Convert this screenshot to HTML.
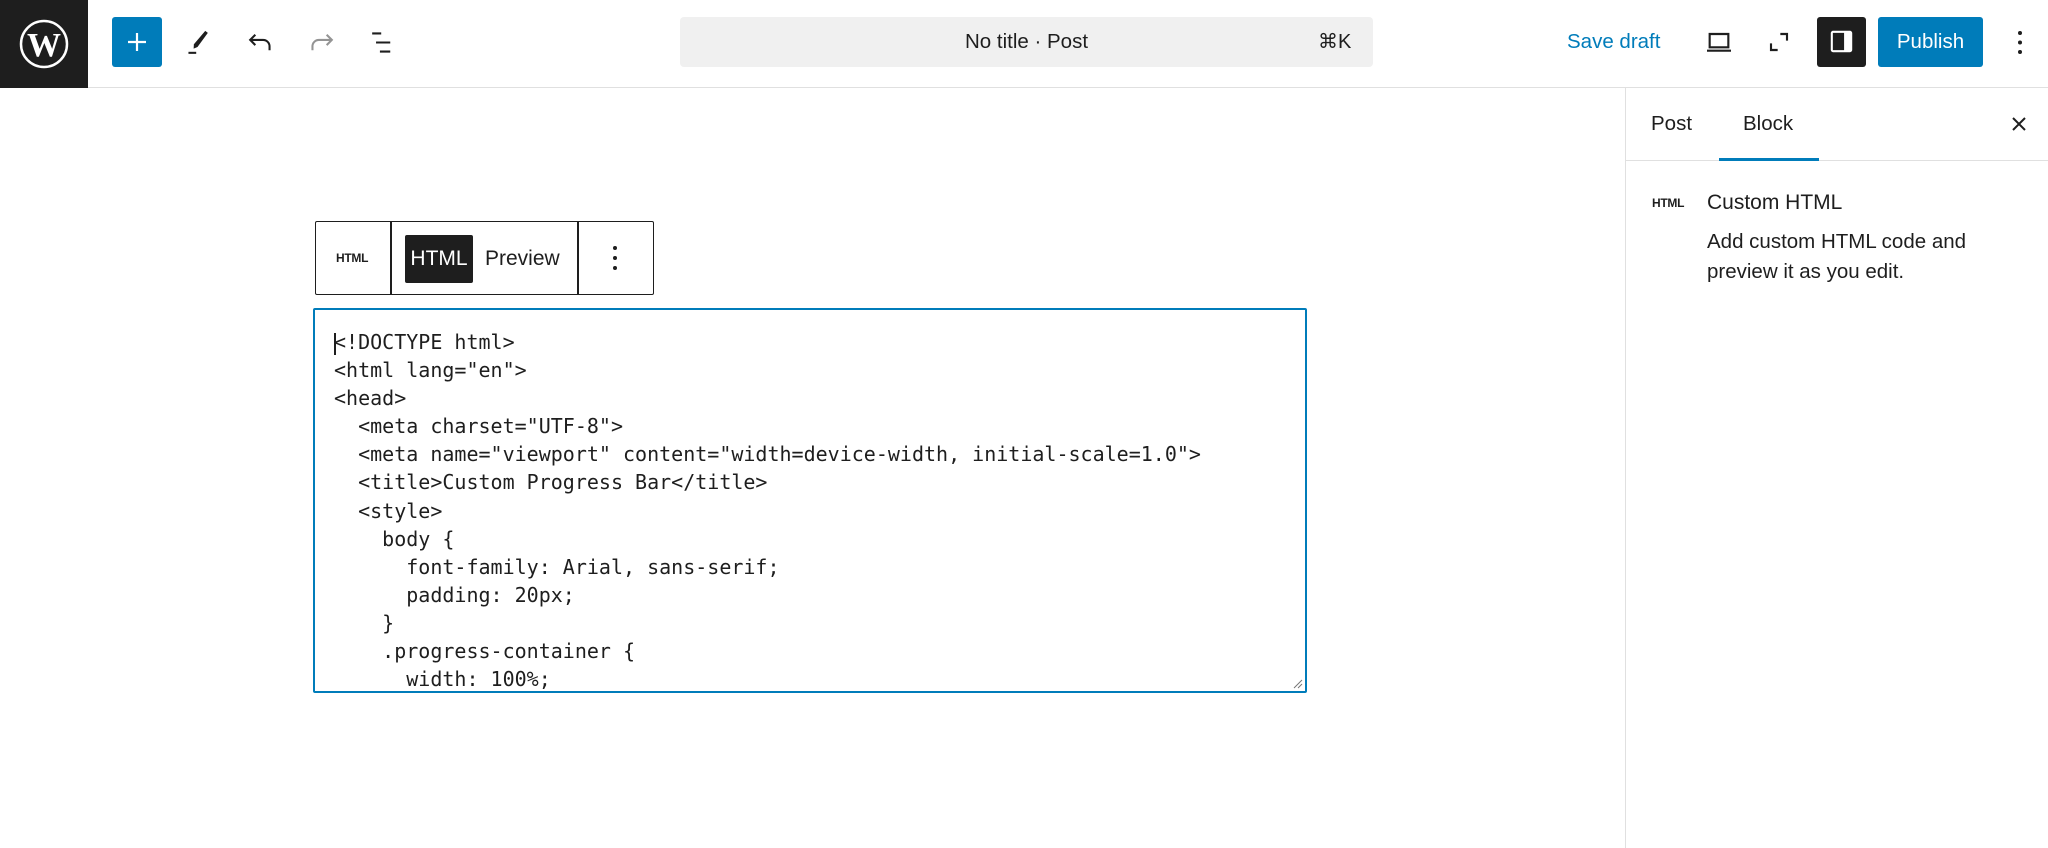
<!DOCTYPE html>
<html><head><style>
*{box-sizing:border-box;margin:0;padding:0}
body{width:2048px;height:848px;background:#fff;font-family:"Liberation Sans",sans-serif;color:#1e1e1e;position:relative;overflow:hidden}
.a{position:absolute}
svg{display:block}
</style></head><body>
<div class="a" style="left:0;top:0;width:2048px;height:88px;border-bottom:1px solid #e0e0e0"></div>
<div class="a" style="left:0;top:0;width:88px;height:88px;background:#1e1e1e">
<svg class="a" style="left:18px;top:18px" width="52" height="52" viewBox="0 0 52 52"><circle cx="26" cy="26" r="23" fill="none" stroke="#fff" stroke-width="2.5"/><text x="26" y="38" text-anchor="middle" font-family="Liberation Serif" font-weight="bold" font-size="34" fill="#fff">W</text></svg>
</div>
<div class="a" style="left:112px;top:17px;width:50px;height:50px;background:#007cba;border-radius:3px">
<svg class="a" style="left:13px;top:13px" width="24" height="24"><path d="M12 3v18M3 12h18" stroke="#fff" stroke-width="2.2"/></svg></div>
<svg class="a" style="left:182px;top:27px" width="31" height="31" viewBox="0 0 24 24"><path d="M18 3l2 1.5-8 11-3 1.2.2-3.3z" fill="#1e1e1e"/><path d="M5 20h6" stroke="#1e1e1e" stroke-width="1.6"/></svg>
<svg class="a" style="left:245px;top:27px" width="31" height="31" viewBox="0 0 24 24" fill="none" stroke="#1e1e1e" stroke-width="1.6"><path d="M8 6l-4 4 4 4M4 10h10a5 5 0 0 1 5 5v3"/></svg>
<svg class="a" style="left:306px;top:27px" width="31" height="31" viewBox="0 0 24 24" fill="none" stroke="#949494" stroke-width="1.6"><path d="M16 6l4 4-4 4M20 10H10a5 5 0 0 0-5 5v3"/></svg>
<svg class="a" style="left:367px;top:27px" width="31" height="31" viewBox="0 0 24 24" fill="none" stroke="#1e1e1e" stroke-width="1.6"><path d="M4 5h7M7 12h11M10 19h8"/></svg>
<div class="a" style="left:680px;top:17px;width:693px;height:50px;background:#f0f0f0;border-radius:4px"></div>
<div class="a" style="left:680px;top:17px;width:693px;height:50px;line-height:50px;text-align:center;font-size:20.5px">No title · Post</div>
<div class="a" style="left:1318px;top:17px;line-height:50px;font-size:20px">⌘K</div>
<div class="a" style="left:1567px;top:17px;line-height:50px;font-size:20.5px;color:#007cba">Save draft</div>
<svg class="a" style="left:1703px;top:26px" width="32" height="32" viewBox="0 0 24 24" fill="none" stroke="#1e1e1e" stroke-width="1.6"><path d="M5 6h14v10H5zM3 18.5h18"/></svg>
<svg class="a" style="left:1763px;top:26px" width="32" height="32" viewBox="0 0 24 24" fill="none" stroke="#1e1e1e" stroke-width="1.6"><path d="M13 6h5v5M6 13v5h5"/></svg>
<div class="a" style="left:1817px;top:17px;width:49px;height:50px;background:#1e1e1e;border-radius:3px">
<svg class="a" style="left:9px;top:9px" width="31" height="31" viewBox="0 0 24 24" fill="none" stroke="#fff" stroke-width="1.6"><rect x="4.5" y="4.5" width="15" height="15" rx="1"/><rect x="14" y="5" width="5" height="14" fill="#fff" stroke="none"/></svg></div>
<div class="a" style="left:1878px;top:17px;width:105px;height:50px;background:#007cba;border-radius:3px;color:#fff;font-size:20.5px;line-height:50px;text-align:center">Publish</div>
<svg class="a" style="left:2010px;top:27px" width="20" height="31"><circle cx="10" cy="6" r="2" fill="#1e1e1e"/><circle cx="10" cy="15.5" r="2" fill="#1e1e1e"/><circle cx="10" cy="25" r="2" fill="#1e1e1e"/></svg>
<!-- sidebar -->
<div class="a" style="left:1625px;top:88px;width:1px;height:760px;background:#e0e0e0"></div>
<div class="a" style="left:1626px;top:160px;width:422px;height:1px;background:#e0e0e0"></div>
<div class="a" style="left:1651px;top:109px;font-size:20.5px;line-height:30px">Post</div>
<div class="a" style="left:1743px;top:109px;font-size:20.5px;line-height:30px">Block</div>
<div class="a" style="left:1719px;top:158px;width:100px;height:3px;background:#007cba"></div>
<svg class="a" style="left:2009px;top:114px" width="20" height="20"><path d="M4 4l12 12M16 4L4 16" stroke="#1e1e1e" stroke-width="2"/></svg>
<div class="a" style="left:1652px;top:196px;font-size:12px;font-weight:bold;letter-spacing:-.3px">HTML</div>
<div class="a" style="left:1707px;top:189px;font-size:21px;line-height:28px">Custom HTML</div>
<div class="a" style="left:1707px;top:227px;font-size:20.5px;line-height:30px;width:340px">Add custom HTML code and<br>preview it as you edit.</div>
<!-- block toolbar -->
<div class="a" style="left:315px;top:221px;width:339px;height:74px;border:1.5px solid #1e1e1e;border-radius:2px"></div>
<div class="a" style="left:390px;top:221px;width:1.5px;height:74px;background:#1e1e1e"></div>
<div class="a" style="left:577px;top:221px;width:1.5px;height:74px;background:#1e1e1e"></div>
<div class="a" style="left:336px;top:251px;font-size:12px;font-weight:bold;letter-spacing:-.3px">HTML</div>
<div class="a" style="left:405px;top:235px;width:68px;height:48px;background:#1e1e1e;border-radius:2px;color:#fff;font-size:21px;line-height:48px;text-align:center">HTML</div>
<div class="a" style="left:485px;top:235px;font-size:21px;line-height:48px">Preview</div>
<svg class="a" style="left:605px;top:242px" width="20" height="32"><circle cx="10" cy="6" r="2" fill="#1e1e1e"/><circle cx="10" cy="16" r="2" fill="#1e1e1e"/><circle cx="10" cy="26" r="2" fill="#1e1e1e"/></svg>
<!-- textarea -->
<div class="a" style="left:313px;top:308px;width:994px;height:385px;border:2.5px solid #007cba;border-radius:2px;overflow:hidden">
<pre style="position:absolute;left:19px;top:18px;font-family:'DejaVu Sans Mono','Liberation Mono',monospace;font-size:20px;line-height:28.1px;color:#1e1e1e">&lt;!DOCTYPE html&gt;
&lt;html lang="en"&gt;
&lt;head&gt;
  &lt;meta charset="UTF-8"&gt;
  &lt;meta name="viewport" content="width=device-width, initial-scale=1.0"&gt;
  &lt;title&gt;Custom Progress Bar&lt;/title&gt;
  &lt;style&gt;
    body {
      font-family: Arial, sans-serif;
      padding: 20px;
    }
    .progress-container {
      width: 100%;</pre>
<div class="a" style="left:19px;top:23px;width:1.5px;height:22px;background:#1e1e1e"></div>
<svg class="a" style="right:2px;bottom:2px" width="12" height="12"><path d="M11 3L3 11M11 7L7 11" stroke="#777" stroke-width="1"/></svg>
</div>
</body></html>
